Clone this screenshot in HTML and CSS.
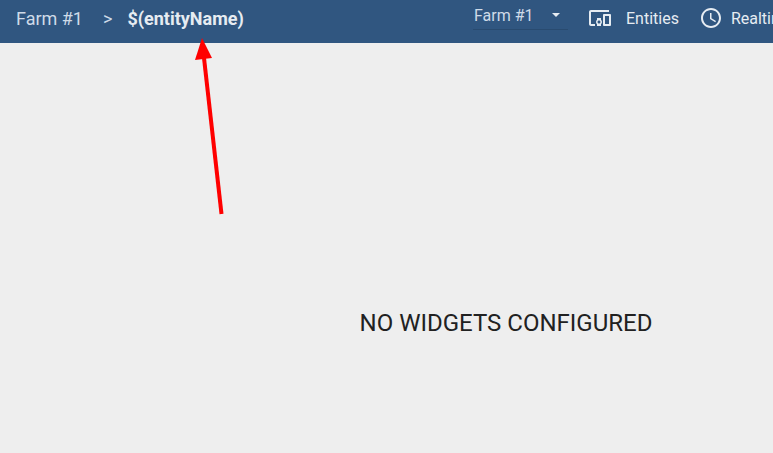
FILE: index.html
```html
<!DOCTYPE html>
<html lang="en">
<head>
    <meta charset="UTF-8">
    <title>Farm #1</title>
    <link rel="stylesheet" href="styles.css">
</head>
<body>
    <div class="dashboard">
        <header class="toolbar">
            <div class="breadcrumb">
                <span class="crumb">Farm #1</span>
                <span class="crumb-sep">&gt;</span>
                <span class="crumb-current">$(entityName)</span>
            </div>
            <div class="state-select">
                <span class="state-value">Farm #1</span>
                <span class="state-caret"></span>
            </div>
            <button class="tool-btn tool-entities">
                <svg class="tool-icon" viewBox="0 0 24 24"><path d="M3 6h18V4H3c-1.1 0-2 .9-2 2v12c0 1.1.9 2 2 2h4v-2H3V6zm10 6H9v1.78c-.61.55-1 1.33-1 2.22s.39 1.67 1 2.22V20h4v-1.78c.61-.55 1-1.34 1-2.22s-.39-1.67-1-2.22V12zm-2 5.5c-.83 0-1.5-.67-1.5-1.5s.67-1.5 1.5-1.5 1.5.67 1.5 1.5-.67 1.5-1.5 1.5zM22 8h-6c-.5 0-1 .5-1 1v10c0 .5.5 1 1 1h6c.5 0 1-.5 1-1V9c0-.5-.5-1-1-1zm-1 10h-4v-8h4v8z"/></svg>
                <span>Entities</span>
            </button>
            <button class="tool-btn tool-time">
                <svg class="tool-icon" viewBox="0 0 24 24"><path d="M11.99 2C6.47 2 2 6.48 2 12s4.47 10 9.99 10C17.52 22 22 17.52 22 12S17.52 2 11.99 2zM12 20c-4.42 0-8-3.58-8-8s3.58-8 8-8 8 3.58 8 8-3.58 8-8 8zm.5-13H11v6l5.25 3.15.75-1.23-4.5-2.67z"/></svg>
                <span>Realtime</span>
            </button>
        </header>
        <main class="content">
            <span class="empty-text">NO WIDGETS CONFIGURED</span>
        </main>
    </div>

    <!-- flecha roja encima de la captura -->
    <svg class="arrow" width="773" height="453" viewBox="0 0 773 453">
        <line x1="221.5" y1="214" x2="204" y2="58" stroke="#ff0000" stroke-width="4"/>
        <polygon points="202,38 212,58 195,60" fill="#ff0000"/>
    </svg>
</body>
</html>
```

FILE: styles.css
```css
html, body {
    margin: 0;
    height: 100%;
    overflow: hidden;
}

body {
    font-family: Roboto, Arial, sans-serif;
    background-color: #eeeeee;
}

.dashboard {
    width: 1012px;
}

.toolbar {
    display: flex;
    box-sizing: border-box;
    align-items: center;
    height: 43px;
    padding-bottom: 7px;
    background-color: #305680;
    color: #e6ecf2;
    font-size: 16px;
}

.breadcrumb {
    display: flex;
    flex: 0 0 457px;
    align-items: center;
    padding-left: 16px;
    color: #cfdbe8;
    font-size: 18px;
    white-space: nowrap;
}

.crumb-sep {
    margin-left: 20px;
}

.crumb-current {
    margin-left: 15px;
    color: #e6ecf2;
    font-weight: 700;
}

.state-select {
    display: flex;
    flex: 0 0 95px;
    box-sizing: border-box;
    align-items: center;
    justify-content: space-between;
    height: 29px;
    margin-bottom: 5px;
    padding: 0 8px 0 1px;
    border-bottom: 1px solid #294b70;
    color: #cfdbe8;
    font-size: 16px;
}

.state-caret {
    width: 0;
    height: 0;
    border-left: 4px solid transparent;
    border-right: 4px solid transparent;
    border-top: 4px solid #e6ecf2;
}

.tool-btn {
    display: flex;
    align-items: center;
    padding: 0;
    border: none;
    background: transparent;
    color: inherit;
    font: inherit;
    white-space: nowrap;
}

.tool-entities {
    gap: 14px;
    margin-left: 20px;
}

.tool-time {
    gap: 8px;
    margin-left: 20px;
}

.tool-icon {
    width: 24px;
    height: 24px;
    fill: #e6ecf2;
}

.content {
    display: flex;
    align-items: center;
    justify-content: center;
    height: 560px;
}

.empty-text {
    color: #212121;
    font-size: 24px;
}

.arrow {
    position: absolute;
    top: 0;
    left: 0;
}
```
